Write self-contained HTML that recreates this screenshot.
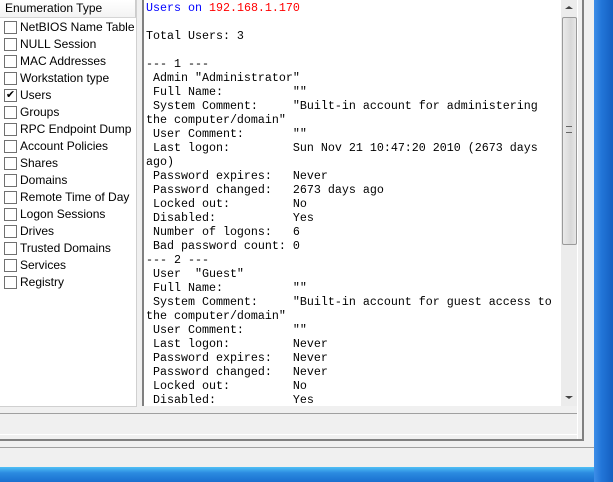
<!DOCTYPE html>
<html><head><style>
body{margin:0;width:613px;height:482px;background:#f0f0f0;position:relative;overflow:hidden;font-family:"Liberation Sans",sans-serif}
#left{position:absolute;left:0;top:0;width:136px;height:406px;background:#fff;border-right:1px solid #d0d0d0;border-bottom:1px solid #d0d0d0}
#hdr{height:17px;background:linear-gradient(#fff,#f3f3f3);border-bottom:1px solid #d5d5d5;font-size:12px;line-height:17px;padding-left:5px;color:#000;border-right:1px solid #ccc;margin-bottom:1px}
.it{height:17px;font-size:12px;line-height:17px;position:relative;padding-left:20px;color:#000}
.cb{position:absolute;left:4px;top:2px;width:11px;height:11px;border:1px solid #707070;background:#fff}
#txt{position:absolute;left:142px;top:0;width:419px;height:406px;background:#fff;border-left:2px solid #808080;overflow:hidden}
pre{margin:0;padding:1px 0 0 2px;font-family:"Liberation Mono",monospace;font-size:11.67px;line-height:14px;color:#000}
#sb{position:absolute;left:561px;top:0;width:16px;height:406px;background:#ececec}
#thumb{position:absolute;left:1px;top:17px;width:13px;height:226px;border:1px solid #9a9a9a;border-radius:2px;background:linear-gradient(90deg,#eaeaea,#d8d8d8 60%,#e6e6e6)}
</style></head><body>
<div id="left"><div id="hdr">Enumeration Type</div>
<div class="it"><span class="cb"></span>NetBIOS Name Table</div>
<div class="it"><span class="cb"></span>NULL Session</div>
<div class="it"><span class="cb"></span>MAC Addresses</div>
<div class="it"><span class="cb"></span>Workstation type</div>
<div class="it"><span class="cb" style="font-size:11px;line-height:11px;text-align:center">✔</span>Users</div>
<div class="it"><span class="cb"></span>Groups</div>
<div class="it"><span class="cb"></span>RPC Endpoint Dump</div>
<div class="it"><span class="cb"></span>Account Policies</div>
<div class="it"><span class="cb"></span>Shares</div>
<div class="it"><span class="cb"></span>Domains</div>
<div class="it"><span class="cb"></span>Remote Time of Day</div>
<div class="it"><span class="cb"></span>Logon Sessions</div>
<div class="it"><span class="cb"></span>Drives</div>
<div class="it"><span class="cb"></span>Trusted Domains</div>
<div class="it"><span class="cb"></span>Services</div>
<div class="it"><span class="cb"></span>Registry</div>
</div>
<div id="txt"><pre><span style="color:#0000ff">Users on </span><span style="color:#ff0000">192.168.1.170</span>

Total Users: 3

--- 1 ---
 Admin "Administrator"
 Full Name:          ""
 System Comment:     "Built-in account for administering
the computer/domain"
 User Comment:       ""
 Last logon:         Sun Nov 21 10:47:20 2010 (2673 days
ago)
 Password expires:   Never
 Password changed:   2673 days ago
 Locked out:         No
 Disabled:           Yes
 Number of logons:   6
 Bad password count: 0
--- 2 ---
 User  "Guest"
 Full Name:          ""
 System Comment:     "Built-in account for guest access to
the computer/domain"
 User Comment:       ""
 Last logon:         Never
 Password expires:   Never
 Password changed:   Never
 Locked out:         No
 Disabled:           Yes</pre></div>
<div id="sb"><div style="position:absolute;left:4px;top:6px;width:0;height:0;border-left:4px solid transparent;border-right:4px solid transparent;border-bottom:3px solid #444"></div><div id="thumb"><div style="position:absolute;left:3px;top:108px;width:6px;height:5px;border-top:1px solid #666;border-bottom:1px solid #666"></div></div><div style="position:absolute;left:4px;top:396px;width:0;height:0;border-left:4px solid transparent;border-right:4px solid transparent;border-top:3px solid #444"></div></div>
<div style="position:absolute;left:0;top:413px;width:578px;height:1px;background:#a0a0a0"></div>
<div style="position:absolute;left:0;top:434px;width:578px;height:1px;background:#fff"></div>
<div style="position:absolute;left:577px;top:0;width:1px;height:440px;background:#fff"></div>
<div style="position:absolute;left:0;top:439px;width:584px;height:2px;background:#808080"></div>
<div style="position:absolute;left:582px;top:0;width:2px;height:441px;background:#808080"></div>
<div style="position:absolute;left:0;top:447px;width:594px;height:1px;background:#a0a0a0"></div>
<div style="position:absolute;left:0;top:467px;width:613px;height:15px;background:linear-gradient(#4fc0f5,#2b8ae0 40%,#1a6fcf)"></div>
<div style="position:absolute;left:594px;top:0;width:19px;height:482px;background:linear-gradient(90deg,#3d8ee8,#2275d8 40%,#1560c0)"></div>
</body></html>
